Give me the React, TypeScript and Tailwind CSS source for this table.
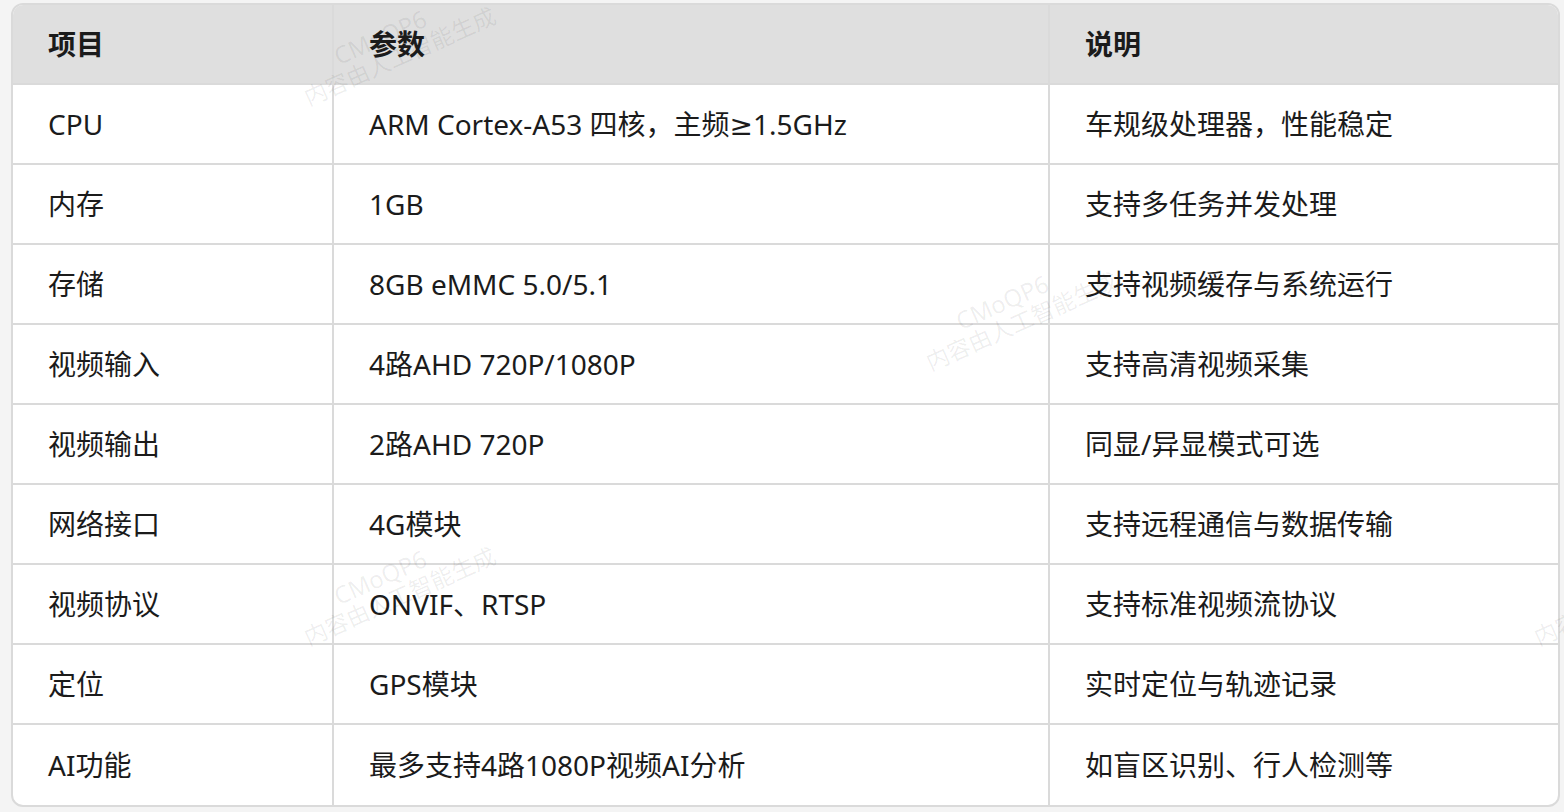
const rows: [string, string, string][] = [
  ["CPU", "ARM Cortex-A53 四核，主频≥1.5GHz", "车规级处理器，性能稳定"],
  ["内存", "1GB", "支持多任务并发处理"],
  ["存储", "8GB eMMC 5.0/5.1", "支持视频缓存与系统运行"],
  ["视频输入", "4路AHD 720P/1080P", "支持高清视频采集"],
  ["视频输出", "2路AHD 720P", "同显/异显模式可选"],
  ["网络接口", "4G模块", "支持远程通信与数据传输"],
  ["视频协议", "ONVIF、RTSP", "支持标准视频流协议"],
  ["定位", "GPS模块", "实时定位与轨迹记录"],
  ["AI功能", "最多支持4路1080P视频AI分析", "如盲区识别、行人检测等"],
];

function Watermark({ left, top }: { left: number; top: number }) {
  return (
    <div
      className="pointer-events-none absolute origin-bottom-left -rotate-[24deg] select-none leading-none text-black/[0.07]"
      style={{ left, top }}
    >
      <div className="pl-[44px] text-[24px]">CMoQP6</div>
      <div className="mt-[2px] text-[23px] whitespace-nowrap">内容由人工智能生成</div>
    </div>
  );
}

export default function App() {
  return (
    <div
      className="relative min-h-screen w-full overflow-hidden bg-[#f4f4f4] pl-[11px] pt-[3px]"
      style={{ fontFamily: '"Noto Sans", "DejaVu Sans", "Noto Sans CJK SC", sans-serif' }}
    >
      <div className="w-[1549px] overflow-hidden rounded-xl border-2 border-[#dadada] bg-white text-[28px] text-[#1b1b1b]">
        <div className="grid grid-cols-[321px_716px_1fr]">
          {["项目", "参数", "说明"].map((h, i) => (
            <div
              key={h}
              className={
                "flex h-[80px] items-center border-b-2 border-[#dadada] bg-[#dfdfdf] pl-[35px] font-bold " +
                (i < 2 ? "border-r-2" : "")
              }
            >
              <span className="relative z-[1]">{h}</span>
            </div>
          ))}
          {rows.map((r, ri) =>
            r.map((c, ci) => (
              <div
                key={ri + "-" + ci}
                className={
                  "flex h-[80px] items-center border-[#dadada] pl-[35px] " +
                  (ci < 2 ? "border-r-2 " : "") +
                  (ri < rows.length - 1 ? "border-b-2" : "")
                }
              >
                <span className="relative z-[1]">{c}</span>
              </div>
            ))
          )}
        </div>
      </div>
      <Watermark left={310} top={60} />
      <Watermark left={932} top={325} />
      <Watermark left={310} top={600} />
      <Watermark left={1540} top={600} />
    </div>
  );
}
